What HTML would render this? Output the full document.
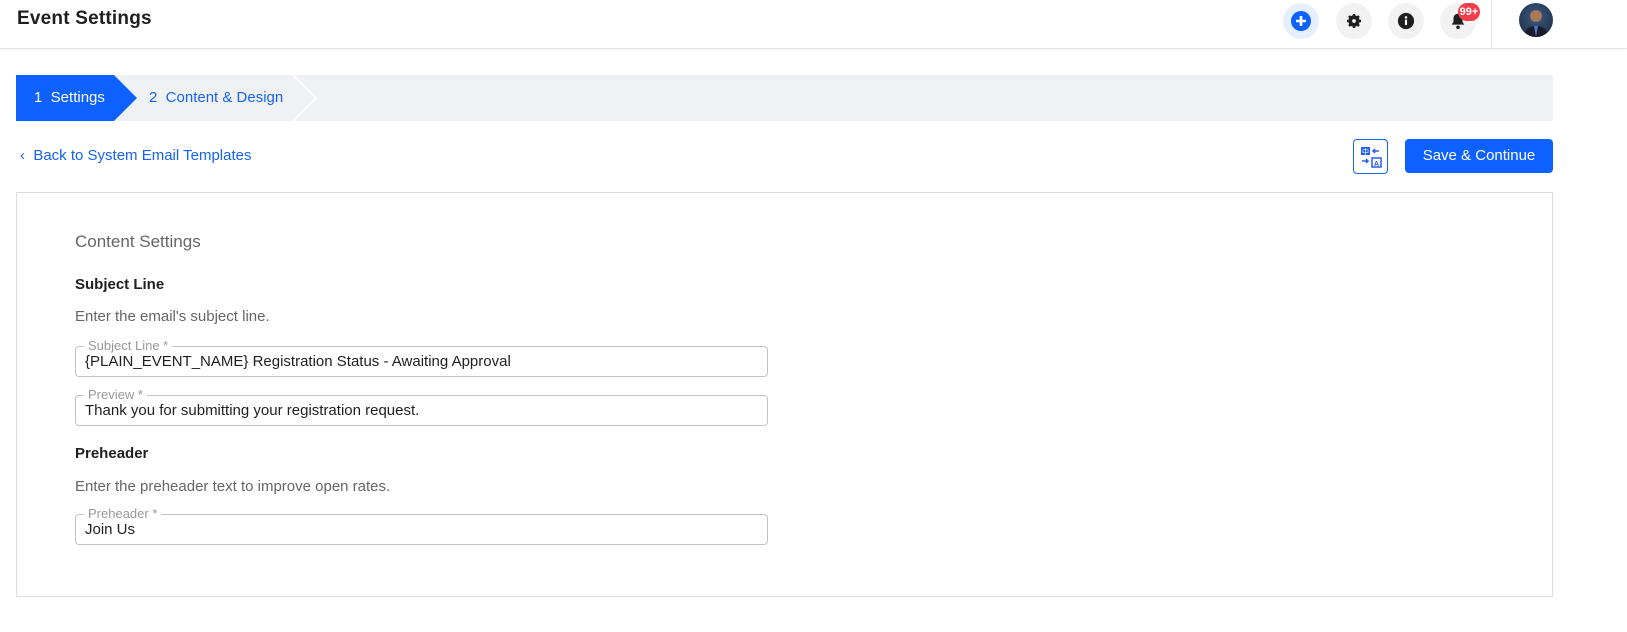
<!DOCTYPE html>
<html><head><meta charset="utf-8">
<style>
*{box-sizing:border-box;margin:0;padding:0}
body{width:1627px;height:632px;background:#fff;font-family:"Liberation Sans",sans-serif;color:#222;position:relative;overflow:hidden}
.hdr{position:absolute;left:0;top:0;width:1627px;height:49px;border-bottom:1px solid #e6e6e6;box-shadow:0 1px 3px rgba(0,0,0,.05)}
.title{position:absolute;left:17px;top:8px;font-size:19px;font-weight:bold;color:#1f1f1f;letter-spacing:.2px}
.ic{position:absolute;top:3px;width:36px;height:36px;border-radius:50%;background:#f2f2f2;display:flex;align-items:center;justify-content:center}
.sep{position:absolute;left:1491px;top:0;width:1px;height:49px;background:#e3e3e3}
.avatar{position:absolute;left:1519px;top:3px;width:34px;height:34px;border-radius:50%;background:radial-gradient(circle at 50% 40%,#3b5a80,#1a2a40);overflow:hidden}
.badge{position:absolute;left:1458px;top:3px;width:22px;height:18px;border-radius:9px;background:#f03e4a;color:#fff;font-size:11px;font-weight:bold;text-align:center;line-height:18px}
.steps{position:absolute;left:16px;top:75px;width:1537px;height:46px;background:#f0f1f5}
.s1{position:absolute;left:0;top:0;height:46px;width:121px;background:#0d62ff;clip-path:polygon(0 0,98px 0,121px 23px,98px 46px,0 46px)}
.st{position:absolute;top:14px;font-size:15px}
.back{position:absolute;left:20px;top:147px;color:#1565f0;font-size:15px}
.tr{position:absolute;left:1353px;top:139px;width:35px;height:35px;border:1px solid #1565f0;border-radius:4px;display:flex;align-items:center;justify-content:center}
.save{position:absolute;left:1405px;top:139px;width:148px;height:34px;background:#0d62ff;border-radius:4px;color:#fff;font-size:15px;text-align:center;line-height:34px}
.card{position:absolute;left:16px;top:192px;width:1537px;height:405px;border:1px solid #dedede}
.h2{position:absolute;left:75px;top:232px;font-size:17px;color:#666}
.lbl{position:absolute;left:75px;font-size:15px;font-weight:bold;color:#1f1f1f}
.help{position:absolute;left:75px;font-size:15px;color:#666}
.inp{position:absolute;left:75px;width:693px;height:31px;border:1px solid #c4c4c4;border-radius:4px}
.inp .l{position:absolute;left:8px;top:-9px;background:#fff;padding:0 4px;font-size:13px;color:#999;line-height:15px}
.inp .v{position:absolute;left:9px;top:6px;font-size:15px;color:#1f1f1f}
</style></head><body>
<div class="hdr">
 <div class="title">Event Settings</div>
 <div class="ic" style="left:1283px;background:#e6effd"><svg width="20" height="20" viewBox="0 0 20 20"><circle cx="10" cy="10" r="10" fill="#0d62ff"/><path d="M10 5v10M5 10h10" stroke="#fff" stroke-width="2.6"/></svg></div>
 <div class="ic" style="left:1336px"><svg width="18" height="18" viewBox="0 0 24 24"><path fill="#1f1f1f" d="M12 8a4 4 0 100 8 4 4 0 000-8zm9.4 2.5l-2.1-.4a7.6 7.6 0 00-.8-1.9l1.2-1.8-2.1-2.1-1.8 1.2a7.6 7.6 0 00-1.9-.8L13.5 2.6h-3l-.4 2.1a7.6 7.6 0 00-1.9.8L6.4 4.3 4.3 6.4l1.2 1.8a7.6 7.6 0 00-.8 1.9l-2.1.4v3l2.1.4c.2.7.4 1.3.8 1.9l-1.2 1.8 2.1 2.1 1.8-1.2c.6.4 1.2.6 1.9.8l.4 2.1h3l.4-2.1c.7-.2 1.3-.4 1.9-.8l1.8 1.2 2.1-2.1-1.2-1.8c.4-.6.6-1.2.8-1.9l2.1-.4z"/><circle cx="12" cy="12" r="2.5" fill="#f2f2f2"/></svg></div>
 <div class="ic" style="left:1388px"><svg width="18" height="18" viewBox="0 0 20 20"><circle cx="10" cy="10" r="9" fill="#1f1f1f"/><rect x="8.8" y="8.5" width="2.4" height="6" fill="#fff"/><circle cx="10" cy="6" r="1.4" fill="#fff"/></svg></div>
 <div class="ic" style="left:1440px"><svg width="18" height="18" viewBox="0 0 20 20"><path d="M10 2c-3 0-5 2.3-5 5v4l-2 3h14l-2-3V7c0-2.7-2-5-5-5z" fill="#1f1f1f"/><circle cx="10" cy="17" r="2" fill="#1f1f1f"/></svg></div>
 <div class="badge">99+</div>
 <div class="sep"></div>
 <div class="avatar"><svg width="34" height="34"><circle cx="17" cy="13" r="6" fill="#a9785a"/><path d="M5 34c1-9 6-11 12-11s11 2 12 11z" fill="#1b1e2a"/><path d="M15 23l2 11 2-11z" fill="#4a7bd0"/></svg></div>
</div>
<div class="steps">
 <div class="s1"></div>
 <div class="st" style="left:18px;color:#fff">1&nbsp;&nbsp;Settings</div>
 <div class="st" style="left:133px;color:#1565f0">2&nbsp;&nbsp;Content &amp; Design</div>
 <svg style="position:absolute;left:275px;top:0" width="30" height="46"><path d="M2 0l23 23-23 23" fill="none" stroke="#fff" stroke-width="2"/></svg>
</div>
<div class="back">‹&nbsp;&nbsp;Back to System Email Templates</div>
<div class="tr"><svg width="22" height="22" viewBox="0 0 22 22"><rect x="1" y="1" width="9" height="8" fill="#2a5ef0"/><text x="5.5" y="8" font-size="7" fill="#fff" text-anchor="middle" font-family="Noto Sans CJK SC,sans-serif">中</text><rect x="12" y="12" width="9" height="9" fill="none" stroke="#2a5ef0" stroke-width="1.5"/><text x="16.5" y="20" font-size="7" fill="#2a5ef0" text-anchor="middle" font-weight="bold">A</text><path d="M13 5h6M15 3l-2 2 2 2M2 15h6M6 13l2 2-2 2" stroke="#2a5ef0" stroke-width="1.5" fill="none"/></svg></div>
<div class="save">Save &amp; Continue</div>
<div class="card"></div>
<div class="h2">Content Settings</div>
<div class="lbl" style="top:276px">Subject Line</div>
<div class="help" style="top:308px">Enter the email's subject line.</div>
<div class="inp" style="top:346px"><span class="l">Subject Line *</span><span class="v">{PLAIN_EVENT_NAME} Registration Status - Awaiting Approval</span></div>
<div class="inp" style="top:395px"><span class="l">Preview *</span><span class="v">Thank you for submitting your registration request.</span></div>
<div class="lbl" style="top:445px">Preheader</div>
<div class="help" style="top:478px">Enter the preheader text to improve open rates.</div>
<div class="inp" style="top:514px"><span class="l">Preheader *</span><span class="v">Join Us</span></div>
</body></html>
